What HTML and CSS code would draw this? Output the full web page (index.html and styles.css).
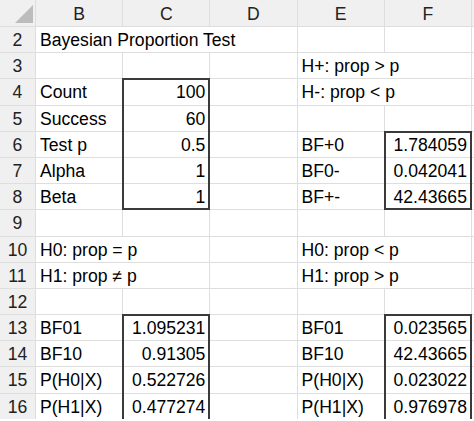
FILE: index.html
```html
<!DOCTYPE html>
<html lang="en">
<head>
<meta charset="utf-8">
<title>Bayesian Proportion Test</title>
<link rel="stylesheet" href="styles.css">
</head>
<body>
<div class="sheet">
  <div class="corner"><svg width="35" height="26" viewBox="0 0 35 26"><polygon points="15,23 33,23 33,5" fill="#bcbcbc"/></svg></div>
  <div class="ch">B</div><div class="ch">C</div><div class="ch">D</div><div class="ch">E</div><div class="ch">F</div><div class="ch"></div>

  <div class="rh">2</div><div class="c s3">Bayesian Proportion Test</div><div class="c"></div><div class="c"></div><div class="c"></div>
  <div class="rh">3</div><div class="c"></div><div class="c"></div><div class="c"></div><div class="c s2">H+: prop &gt; p</div><div class="c"></div>
  <div class="rh">4</div><div class="c">Count</div><div class="c n box top">100</div><div class="c"></div><div class="c s2">H-: prop &lt; p</div><div class="c"></div>
  <div class="rh">5</div><div class="c">Success</div><div class="c n box">60</div><div class="c"></div><div class="c"></div><div class="c"></div><div class="c"></div>
  <div class="rh">6</div><div class="c">Test p</div><div class="c n box">0.5</div><div class="c"></div><div class="c">BF+0</div><div class="c n box top">1.784059</div><div class="c"></div>
  <div class="rh">7</div><div class="c">Alpha</div><div class="c n box">1</div><div class="c"></div><div class="c">BF0-</div><div class="c n box">0.042041</div><div class="c"></div>
  <div class="rh">8</div><div class="c">Beta</div><div class="c n box bot">1</div><div class="c"></div><div class="c">BF+-</div><div class="c n box bot">42.43665</div><div class="c"></div>
  <div class="rh">9</div><div class="c"></div><div class="c"></div><div class="c"></div><div class="c"></div><div class="c"></div><div class="c"></div>
  <div class="rh">10</div><div class="c s2">H0: prop = p</div><div class="c"></div><div class="c s2">H0: prop &lt; p</div><div class="c"></div>
  <div class="rh">11</div><div class="c s2">H1: prop ≠ p</div><div class="c"></div><div class="c s2">H1: prop &gt; p</div><div class="c"></div>
  <div class="rh">12</div><div class="c"></div><div class="c"></div><div class="c"></div><div class="c"></div><div class="c"></div><div class="c"></div>
  <div class="rh">13</div><div class="c">BF01</div><div class="c n box top">1.095231</div><div class="c"></div><div class="c">BF01</div><div class="c n box top">0.023565</div><div class="c"></div>
  <div class="rh">14</div><div class="c">BF10</div><div class="c n box">0.91305</div><div class="c"></div><div class="c">BF10</div><div class="c n box">42.43665</div><div class="c"></div>
  <div class="rh">15</div><div class="c">P(H0|X)</div><div class="c n box">0.522726</div><div class="c"></div><div class="c">P(H0|X)</div><div class="c n box">0.023022</div><div class="c"></div>
  <div class="rh">16</div><div class="c">P(H1|X)</div><div class="c n box">0.477274</div><div class="c"></div><div class="c">P(H1|X)</div><div class="c n box">0.976978</div><div class="c"></div>
</div>
</body>
</html>
```

FILE: styles.css
```css
html, body {
  margin: 0;
  padding: 0;
  background: #ffffff;
  overflow: hidden;
}

.sheet {
  display: grid;
  grid-template-columns: 35px repeat(5, 86.2px) 1fr;
  grid-template-rows: 26px repeat(15, 25.2px);
  gap: 1px;
  background: #dedede;
  width: 474px;
  font-family: "Liberation Sans", Arial, sans-serif;
  font-size: 17.6px;
  color: #000;
}

.corner {
  background: #f0f0f0;
  display: flex;
}

.ch {
  background: #f0f0f0;
  color: #222;
  text-align: center;
  line-height: 24px;
  padding-top: 2px;
}

.rh {
  background: #f0f0f0;
  color: #222;
  text-align: center;
  line-height: 25.2px;
  padding-top: 1px;
  box-sizing: border-box;
}

.c {
  background: #ffffff;
  line-height: 24.2px;
  padding: 1px 4px 0 4px;
  white-space: nowrap;
  position: relative;
}

.n {
  text-align: right;
}

.s2 {
  grid-column: span 2;
}

.s3 {
  grid-column: span 3;
}

.box::after {
  content: "";
  position: absolute;
  left: -1px;
  right: -1px;
  top: -1px;
  bottom: -1px;
  border-left: 2px solid #3a3a3a;
  border-right: 2px solid #3a3a3a;
  pointer-events: none;
}

.box.top::after {
  border-top: 2px solid #3a3a3a;
}

.box.bot::after {
  border-bottom: 2px solid #3a3a3a;
}
```
